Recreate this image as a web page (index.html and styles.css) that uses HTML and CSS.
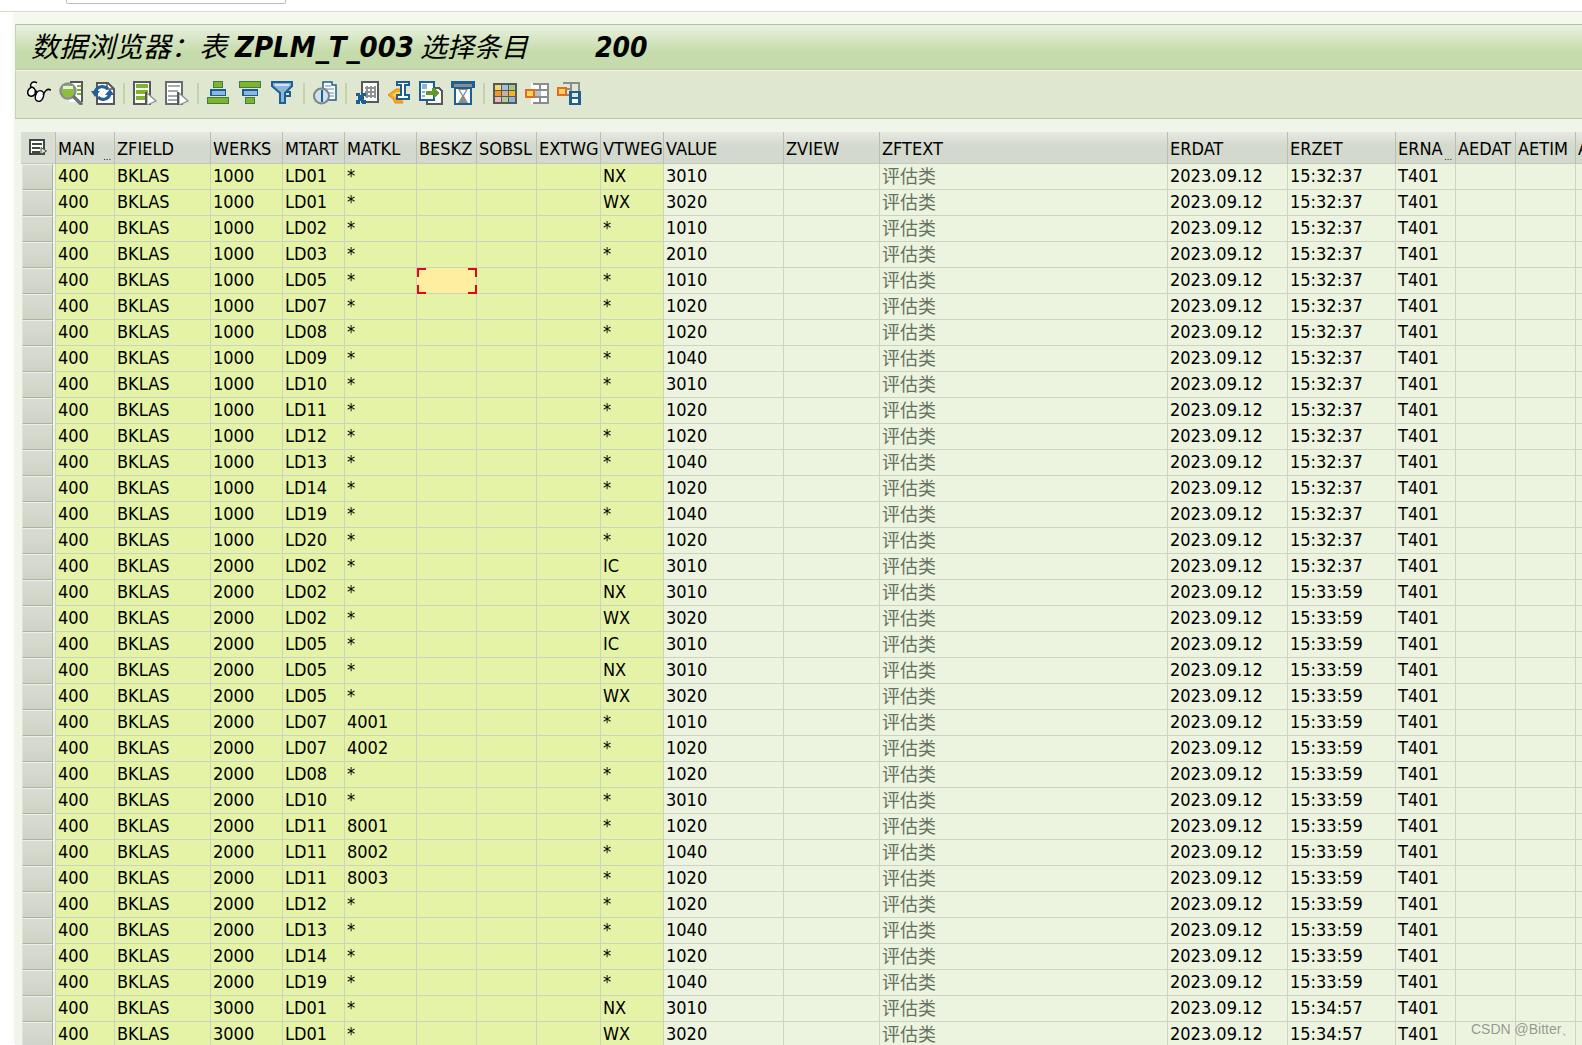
FILE: index.html
```html
<!DOCTYPE html>
<html lang="zh">
<head>
<meta charset="utf-8">
<title>数据浏览器</title>
<link rel="stylesheet" href="styles.css">
</head>
<body>
<div class="topbar"><div class="inputstub"></div></div>
<div class="shell">
<div class="panel">
<div class="titlebar"><h1 class="title">数据浏览器：表 <b>ZPLM_T_003</b> <span class="tail">选择条目</span><b class="count">200</b></h1></div>
<div class="toolbar">
<svg class="ic" viewBox="0 0 24 24"><g fill="#fff" stroke="#000" stroke-width="1.500"><path d="M10 2C8 0 5 1 4 3C3 5 4 6 5 6C2 7 0 10 1 13C2 16 6 16 8 13C9 10 8 7 5 6"/><ellipse cx="12.500" cy="15" rx="4" ry="5.500" transform="rotate(20 12.500 15)"/><path fill="none" d="M8 11L10 10M16 14C18 10 20 7 24 9"/></g></svg>
<svg class="ic" viewBox="0 0 24 24" shape-rendering="crispEdges"><path fill="#fff" d="M10 1H24V21H10Z"/><path fill="none" stroke="#55595a" stroke-width="2" d="M11 1H23V21"/><path fill="#7fb52a" d="M18 4H22V6H18ZM18 8H22V10H18ZM18 12H22V14H18Z"/><circle cx="9" cy="10" r="7.500" fill="#8cc03a" stroke="#8b8f90" stroke-width="2.400" shape-rendering="auto"/><path d="M4 5H14V8H4Z" fill="#e6efd8"/><path stroke="#6d7071" stroke-width="3.400" d="M14 15L23 24" shape-rendering="auto"/></svg>
<svg class="ic" viewBox="0 0 24 24"><path fill="#fff" stroke="#55595a" stroke-width="2" d="M6 2H17L23 8V23H6Z"/><path fill="none" stroke="#55595a" stroke-width="1.500" d="M16 2V8H23"/><path fill="none" stroke="#245f9e" stroke-width="3.200" d="M4 11C6 5 13 4 17 8M19 13C17 19 10 20 7 16"/><path fill="#245f9e" d="M0 10H9L4 16ZM23 14H14L19 8Z"/></svg>
<span class="sep"></span>
<svg class="ic" viewBox="0 0 24 24" shape-rendering="crispEdges"><path fill="#fff" d="M1 1H17V23H1Z"/><path fill="none" stroke="#55595a" stroke-width="2" d="M1 1H17V23H1Z"/><path fill="#7fb52a" d="M3 3H15V7H3ZM3 9H15V13H3ZM3 15H13V19H3Z"/><path fill="#fff" stroke="#8a8d8e" stroke-width="1.200" d="M14 12L23 20L14 24Z" shape-rendering="auto"/><path stroke="#55595a" stroke-width="2" d="M13 11V24"/></svg>
<svg class="ic" viewBox="0 0 24 24" shape-rendering="crispEdges"><path fill="#fff" d="M1 1H17V23H1Z"/><path fill="none" stroke="#6a6d6e" stroke-width="2" d="M1 1H17V23H1Z"/><path fill="none" stroke="#a8abac" stroke-width="2" d="M3 5H15M3 10H13M3 15H13M3 19H13"/><path fill="#fff" stroke="#8a8d8e" stroke-width="1.200" d="M14 12L23 20L14 24Z" shape-rendering="auto"/><path stroke="#55595a" stroke-width="2" d="M13 11V24"/></svg>
<span class="sep"></span>
<svg class="ic" viewBox="0 0 24 24" shape-rendering="crispEdges"><path fill="#7fb52a" stroke="#3f7a4a" d="M6.500 .5H15.500V6.500H6.500Z"/><path fill="#8fb7dc" stroke="#1b5f93" stroke-width="1.500" d="M3.750 8.750H18.250V14.250H3.750Z"/><path fill="#7fb52a" stroke="#3f7a4a" d="M.5 16.500H21.500V22.500H.5Z"/></svg>
<svg class="ic" viewBox="0 0 24 24" shape-rendering="crispEdges"><path fill="#7fb52a" stroke="#3f7a4a" d="M.5 .5H21.500V6.500H.5Z"/><path fill="#8fb7dc" stroke="#1b5f93" stroke-width="1.500" d="M3.750 8.750H18.250V14.250H3.750Z"/><path fill="#7fb52a" stroke="#3f7a4a" d="M6.500 16.500H15.500V22.500H6.500Z"/></svg>
<svg class="ic" viewBox="0 0 24 24"><path fill="#8fb4d9" stroke="#1b5f93" stroke-width="2" d="M1 1H21V5L14 12V22H9V12L1 5Z"/><path fill="none" stroke="#1b5f93" stroke-width="2" d="M15 11H19V15H15"/><path fill="#d4e1ef" d="M4 3H18V5H4Z"/></svg>
<span class="sep"></span>
<svg class="ic" viewBox="0 0 24 24"><path fill="#fff" stroke="#1b5f93" stroke-width="1.500" d="M10 1H19V4H23V19H10Z"/><path stroke="#8fb4d9" stroke-width="1.500" d="M12 5H18M12 8H21M14 12H21M14 15H21"/><circle cx="8.500" cy="15" r="7.500" fill="#cfdfee" stroke="#7f8485" stroke-width="2"/><path fill="#1b5f93" d="M8 9H10V21H8Z"/></svg>
<span class="sep"></span>
<svg class="ic" viewBox="0 0 24 24" shape-rendering="crispEdges"><path fill="#fff" stroke="#55595a" stroke-width="2" d="M7 1H23V21H7Z"/><path stroke="#8f9293" stroke-width="2" fill="none" d="M12 5V17M16 5V17M20 5V17M10 7H21M10 11H21M10 15H21"/><path fill="#1b5f93" d="M1 12H5V14H7V12H11V15H9V19H11V23H7V20H5V23H1V19H3V15H1Z"/></svg>
<svg class="ic" viewBox="0 0 24 24"><path fill="#f7a823" stroke="#e8881a" d="M1 14L9 8H14V18L16 22H8L6 18Z"/><path fill="#fbd65a" d="M5 14L10 11H13V16H8Z"/><path fill="#fff" stroke="#1b5f93" stroke-width="2" d="M10 1H22V4H18V14H22V18H10V14H14V4H10Z"/></svg>
<svg class="ic" viewBox="0 0 24 24" shape-rendering="crispEdges"><path fill="#fff" stroke="#55595a" stroke-width="2" d="M14 7H20L23 10V23H8V19"/><path fill="#fff" stroke="#1b5f93" stroke-width="2" d="M1 1H15V19H1Z"/><path fill="#8fb4d9" d="M3 3H8V8H3ZM3 10H6V12H3ZM3 14H6V16H3Z"/><path fill="#5f9a2a" d="M7 10H13V7H15L21 12L15 17V14H7Z"/></svg>
<svg class="ic" viewBox="0 0 24 24" shape-rendering="crispEdges"><path fill="#1b5f93" d="M0 0H24V7H0Z"/><path fill="#8a8d8e" d="M3 3H21V7H3Z"/><path fill="#fff" stroke="#1b5f93" stroke-width="2" d="M4 7H20V23H4Z"/><path fill="#8a8d8e" d="M7 8H17L13 15L17 22H7L11 15Z" shape-rendering="auto"/><path fill="#fff" d="M9 9H15L12 14Z" shape-rendering="auto"/></svg>
<span class="sep"></span>
<svg class="ic" viewBox="0 0 24 24" shape-rendering="crispEdges"><path fill="#55595a" d="M0 2H24V23H0Z"/><path fill="#f8d66a" d="M2 4H8V9H2Z"/><path fill="#9cc0e4" d="M9 4H15V9H9Z"/><path fill="#a5c979" d="M16 4H22V9H16Z"/><path fill="#f29a1f" d="M2 10H8V15H2Z"/><path fill="#c8b09c" d="M9 10H15V15H9Z"/><path fill="#f7b21d" d="M16 10H22V15H16Z"/><path fill="#efb8bd" d="M2 16H8V21H2Z"/><path fill="#aed08f" d="M9 16H15V21H9Z"/><path fill="#8fb4d9" d="M16 16H22V21H16Z"/></svg>
<svg class="ic" viewBox="0 0 24 24" shape-rendering="crispEdges"><path fill="#fff" d="M6 2H24V23H6Z"/><path fill="none" stroke="#8a8d8e" stroke-width="2" d="M8 3H23V22H8M15 3V22M22 9H8M22 16H8"/><path fill="#bcbfc0" d="M10 10H16V15H10Z"/><path fill="#fbd65a" stroke="#e26a23" stroke-width="2" d="M1 9H9V16H1Z"/></svg>
<svg class="ic" viewBox="0 0 24 24" shape-rendering="crispEdges"><path fill="none" stroke="#8a8d8e" stroke-width="2" d="M6 2H22V10M14 2V18M6 8H14M6 14H14"/><path fill="#fbd65a" stroke="#e26a23" stroke-width="2" d="M1 7H9V14H1Z"/><path fill="#1b5f93" d="M12 10H24V24H12Z"/><path fill="#dfe7d0" d="M15 12H21V16H15Z"/><path fill="#fff" d="M15 18H21V22H15Z"/></svg>
</div>
<div class="gridwrap">
<table class="grid">
<colgroup><col class="c-rh"><col class="c-man"><col class="c-zfield"><col class="c-werks"><col class="c-mtart"><col class="c-matkl"><col class="c-beskz"><col class="c-sobsl"><col class="c-extwg"><col class="c-vtweg"><col class="c-value"><col class="c-zview"><col class="c-zftext"><col class="c-erdat"><col class="c-erzet"><col class="c-erna"><col class="c-aedat"><col class="c-aetim"><col class="c-last"></colgroup>
<thead><tr><th class="corner"><svg class="selicon" viewBox="0 0 18 17" shape-rendering="crispEdges"><path fill="#fff" stroke="#3f4a45" stroke-width="2" d="M1 1H15V15H1Z"/><path stroke="#3f4a45" stroke-width="2" d="M3 5H13M3 9H11M3 13H11"/><path fill="#dfe7d0" stroke="#3f4a45" d="M12 8.500L17.500 12L12 15.500Z" shape-rendering="auto"/></svg></th><th class="trunc">MAN</th><th>ZFIELD</th><th>WERKS</th><th>MTART</th><th>MATKL</th><th>BESKZ</th><th>SOBSL</th><th>EXTWG</th><th>VTWEG</th><th>VALUE</th><th>ZVIEW</th><th>ZFTEXT</th><th>ERDAT</th><th>ERZET</th><th class="trunc">ERNA</th><th>AEDAT</th><th>AETIM</th><th>AENAM</th></tr></thead>
<tbody>
<tr><td class="rh"><div class="rb"></div></td><td class="k">400</td><td class="k">BKLAS</td><td class="k">1000</td><td class="k">LD01</td><td class="k">*</td><td class="k"></td><td class="k"></td><td class="k"></td><td class="k">NX</td><td>3010</td><td></td><td class="zh">评估类</td><td>2023.09.12</td><td>15:32:37</td><td>T401</td><td></td><td></td><td></td></tr>
<tr><td class="rh"><div class="rb"></div></td><td class="k">400</td><td class="k">BKLAS</td><td class="k">1000</td><td class="k">LD01</td><td class="k">*</td><td class="k"></td><td class="k"></td><td class="k"></td><td class="k">WX</td><td>3020</td><td></td><td class="zh">评估类</td><td>2023.09.12</td><td>15:32:37</td><td>T401</td><td></td><td></td><td></td></tr>
<tr><td class="rh"><div class="rb"></div></td><td class="k">400</td><td class="k">BKLAS</td><td class="k">1000</td><td class="k">LD02</td><td class="k">*</td><td class="k"></td><td class="k"></td><td class="k"></td><td class="k">*</td><td>1010</td><td></td><td class="zh">评估类</td><td>2023.09.12</td><td>15:32:37</td><td>T401</td><td></td><td></td><td></td></tr>
<tr><td class="rh"><div class="rb"></div></td><td class="k">400</td><td class="k">BKLAS</td><td class="k">1000</td><td class="k">LD03</td><td class="k">*</td><td class="k"></td><td class="k"></td><td class="k"></td><td class="k">*</td><td>2010</td><td></td><td class="zh">评估类</td><td>2023.09.12</td><td>15:32:37</td><td>T401</td><td></td><td></td><td></td></tr>
<tr><td class="rh"><div class="rb"></div></td><td class="k">400</td><td class="k">BKLAS</td><td class="k">1000</td><td class="k">LD05</td><td class="k">*</td><td class="sel"></td><td class="k"></td><td class="k"></td><td class="k">*</td><td>1010</td><td></td><td class="zh">评估类</td><td>2023.09.12</td><td>15:32:37</td><td>T401</td><td></td><td></td><td></td></tr>
<tr><td class="rh"><div class="rb"></div></td><td class="k">400</td><td class="k">BKLAS</td><td class="k">1000</td><td class="k">LD07</td><td class="k">*</td><td class="k"></td><td class="k"></td><td class="k"></td><td class="k">*</td><td>1020</td><td></td><td class="zh">评估类</td><td>2023.09.12</td><td>15:32:37</td><td>T401</td><td></td><td></td><td></td></tr>
<tr><td class="rh"><div class="rb"></div></td><td class="k">400</td><td class="k">BKLAS</td><td class="k">1000</td><td class="k">LD08</td><td class="k">*</td><td class="k"></td><td class="k"></td><td class="k"></td><td class="k">*</td><td>1020</td><td></td><td class="zh">评估类</td><td>2023.09.12</td><td>15:32:37</td><td>T401</td><td></td><td></td><td></td></tr>
<tr><td class="rh"><div class="rb"></div></td><td class="k">400</td><td class="k">BKLAS</td><td class="k">1000</td><td class="k">LD09</td><td class="k">*</td><td class="k"></td><td class="k"></td><td class="k"></td><td class="k">*</td><td>1040</td><td></td><td class="zh">评估类</td><td>2023.09.12</td><td>15:32:37</td><td>T401</td><td></td><td></td><td></td></tr>
<tr><td class="rh"><div class="rb"></div></td><td class="k">400</td><td class="k">BKLAS</td><td class="k">1000</td><td class="k">LD10</td><td class="k">*</td><td class="k"></td><td class="k"></td><td class="k"></td><td class="k">*</td><td>3010</td><td></td><td class="zh">评估类</td><td>2023.09.12</td><td>15:32:37</td><td>T401</td><td></td><td></td><td></td></tr>
<tr><td class="rh"><div class="rb"></div></td><td class="k">400</td><td class="k">BKLAS</td><td class="k">1000</td><td class="k">LD11</td><td class="k">*</td><td class="k"></td><td class="k"></td><td class="k"></td><td class="k">*</td><td>1020</td><td></td><td class="zh">评估类</td><td>2023.09.12</td><td>15:32:37</td><td>T401</td><td></td><td></td><td></td></tr>
<tr><td class="rh"><div class="rb"></div></td><td class="k">400</td><td class="k">BKLAS</td><td class="k">1000</td><td class="k">LD12</td><td class="k">*</td><td class="k"></td><td class="k"></td><td class="k"></td><td class="k">*</td><td>1020</td><td></td><td class="zh">评估类</td><td>2023.09.12</td><td>15:32:37</td><td>T401</td><td></td><td></td><td></td></tr>
<tr><td class="rh"><div class="rb"></div></td><td class="k">400</td><td class="k">BKLAS</td><td class="k">1000</td><td class="k">LD13</td><td class="k">*</td><td class="k"></td><td class="k"></td><td class="k"></td><td class="k">*</td><td>1040</td><td></td><td class="zh">评估类</td><td>2023.09.12</td><td>15:32:37</td><td>T401</td><td></td><td></td><td></td></tr>
<tr><td class="rh"><div class="rb"></div></td><td class="k">400</td><td class="k">BKLAS</td><td class="k">1000</td><td class="k">LD14</td><td class="k">*</td><td class="k"></td><td class="k"></td><td class="k"></td><td class="k">*</td><td>1020</td><td></td><td class="zh">评估类</td><td>2023.09.12</td><td>15:32:37</td><td>T401</td><td></td><td></td><td></td></tr>
<tr><td class="rh"><div class="rb"></div></td><td class="k">400</td><td class="k">BKLAS</td><td class="k">1000</td><td class="k">LD19</td><td class="k">*</td><td class="k"></td><td class="k"></td><td class="k"></td><td class="k">*</td><td>1040</td><td></td><td class="zh">评估类</td><td>2023.09.12</td><td>15:32:37</td><td>T401</td><td></td><td></td><td></td></tr>
<tr><td class="rh"><div class="rb"></div></td><td class="k">400</td><td class="k">BKLAS</td><td class="k">1000</td><td class="k">LD20</td><td class="k">*</td><td class="k"></td><td class="k"></td><td class="k"></td><td class="k">*</td><td>1020</td><td></td><td class="zh">评估类</td><td>2023.09.12</td><td>15:32:37</td><td>T401</td><td></td><td></td><td></td></tr>
<tr><td class="rh"><div class="rb"></div></td><td class="k">400</td><td class="k">BKLAS</td><td class="k">2000</td><td class="k">LD02</td><td class="k">*</td><td class="k"></td><td class="k"></td><td class="k"></td><td class="k">IC</td><td>3010</td><td></td><td class="zh">评估类</td><td>2023.09.12</td><td>15:32:37</td><td>T401</td><td></td><td></td><td></td></tr>
<tr><td class="rh"><div class="rb"></div></td><td class="k">400</td><td class="k">BKLAS</td><td class="k">2000</td><td class="k">LD02</td><td class="k">*</td><td class="k"></td><td class="k"></td><td class="k"></td><td class="k">NX</td><td>3010</td><td></td><td class="zh">评估类</td><td>2023.09.12</td><td>15:33:59</td><td>T401</td><td></td><td></td><td></td></tr>
<tr><td class="rh"><div class="rb"></div></td><td class="k">400</td><td class="k">BKLAS</td><td class="k">2000</td><td class="k">LD02</td><td class="k">*</td><td class="k"></td><td class="k"></td><td class="k"></td><td class="k">WX</td><td>3020</td><td></td><td class="zh">评估类</td><td>2023.09.12</td><td>15:33:59</td><td>T401</td><td></td><td></td><td></td></tr>
<tr><td class="rh"><div class="rb"></div></td><td class="k">400</td><td class="k">BKLAS</td><td class="k">2000</td><td class="k">LD05</td><td class="k">*</td><td class="k"></td><td class="k"></td><td class="k"></td><td class="k">IC</td><td>3010</td><td></td><td class="zh">评估类</td><td>2023.09.12</td><td>15:33:59</td><td>T401</td><td></td><td></td><td></td></tr>
<tr><td class="rh"><div class="rb"></div></td><td class="k">400</td><td class="k">BKLAS</td><td class="k">2000</td><td class="k">LD05</td><td class="k">*</td><td class="k"></td><td class="k"></td><td class="k"></td><td class="k">NX</td><td>3010</td><td></td><td class="zh">评估类</td><td>2023.09.12</td><td>15:33:59</td><td>T401</td><td></td><td></td><td></td></tr>
<tr><td class="rh"><div class="rb"></div></td><td class="k">400</td><td class="k">BKLAS</td><td class="k">2000</td><td class="k">LD05</td><td class="k">*</td><td class="k"></td><td class="k"></td><td class="k"></td><td class="k">WX</td><td>3020</td><td></td><td class="zh">评估类</td><td>2023.09.12</td><td>15:33:59</td><td>T401</td><td></td><td></td><td></td></tr>
<tr><td class="rh"><div class="rb"></div></td><td class="k">400</td><td class="k">BKLAS</td><td class="k">2000</td><td class="k">LD07</td><td class="k">4001</td><td class="k"></td><td class="k"></td><td class="k"></td><td class="k">*</td><td>1010</td><td></td><td class="zh">评估类</td><td>2023.09.12</td><td>15:33:59</td><td>T401</td><td></td><td></td><td></td></tr>
<tr><td class="rh"><div class="rb"></div></td><td class="k">400</td><td class="k">BKLAS</td><td class="k">2000</td><td class="k">LD07</td><td class="k">4002</td><td class="k"></td><td class="k"></td><td class="k"></td><td class="k">*</td><td>1020</td><td></td><td class="zh">评估类</td><td>2023.09.12</td><td>15:33:59</td><td>T401</td><td></td><td></td><td></td></tr>
<tr><td class="rh"><div class="rb"></div></td><td class="k">400</td><td class="k">BKLAS</td><td class="k">2000</td><td class="k">LD08</td><td class="k">*</td><td class="k"></td><td class="k"></td><td class="k"></td><td class="k">*</td><td>1020</td><td></td><td class="zh">评估类</td><td>2023.09.12</td><td>15:33:59</td><td>T401</td><td></td><td></td><td></td></tr>
<tr><td class="rh"><div class="rb"></div></td><td class="k">400</td><td class="k">BKLAS</td><td class="k">2000</td><td class="k">LD10</td><td class="k">*</td><td class="k"></td><td class="k"></td><td class="k"></td><td class="k">*</td><td>3010</td><td></td><td class="zh">评估类</td><td>2023.09.12</td><td>15:33:59</td><td>T401</td><td></td><td></td><td></td></tr>
<tr><td class="rh"><div class="rb"></div></td><td class="k">400</td><td class="k">BKLAS</td><td class="k">2000</td><td class="k">LD11</td><td class="k">8001</td><td class="k"></td><td class="k"></td><td class="k"></td><td class="k">*</td><td>1020</td><td></td><td class="zh">评估类</td><td>2023.09.12</td><td>15:33:59</td><td>T401</td><td></td><td></td><td></td></tr>
<tr><td class="rh"><div class="rb"></div></td><td class="k">400</td><td class="k">BKLAS</td><td class="k">2000</td><td class="k">LD11</td><td class="k">8002</td><td class="k"></td><td class="k"></td><td class="k"></td><td class="k">*</td><td>1040</td><td></td><td class="zh">评估类</td><td>2023.09.12</td><td>15:33:59</td><td>T401</td><td></td><td></td><td></td></tr>
<tr><td class="rh"><div class="rb"></div></td><td class="k">400</td><td class="k">BKLAS</td><td class="k">2000</td><td class="k">LD11</td><td class="k">8003</td><td class="k"></td><td class="k"></td><td class="k"></td><td class="k">*</td><td>1020</td><td></td><td class="zh">评估类</td><td>2023.09.12</td><td>15:33:59</td><td>T401</td><td></td><td></td><td></td></tr>
<tr><td class="rh"><div class="rb"></div></td><td class="k">400</td><td class="k">BKLAS</td><td class="k">2000</td><td class="k">LD12</td><td class="k">*</td><td class="k"></td><td class="k"></td><td class="k"></td><td class="k">*</td><td>1020</td><td></td><td class="zh">评估类</td><td>2023.09.12</td><td>15:33:59</td><td>T401</td><td></td><td></td><td></td></tr>
<tr><td class="rh"><div class="rb"></div></td><td class="k">400</td><td class="k">BKLAS</td><td class="k">2000</td><td class="k">LD13</td><td class="k">*</td><td class="k"></td><td class="k"></td><td class="k"></td><td class="k">*</td><td>1040</td><td></td><td class="zh">评估类</td><td>2023.09.12</td><td>15:33:59</td><td>T401</td><td></td><td></td><td></td></tr>
<tr><td class="rh"><div class="rb"></div></td><td class="k">400</td><td class="k">BKLAS</td><td class="k">2000</td><td class="k">LD14</td><td class="k">*</td><td class="k"></td><td class="k"></td><td class="k"></td><td class="k">*</td><td>1020</td><td></td><td class="zh">评估类</td><td>2023.09.12</td><td>15:33:59</td><td>T401</td><td></td><td></td><td></td></tr>
<tr><td class="rh"><div class="rb"></div></td><td class="k">400</td><td class="k">BKLAS</td><td class="k">2000</td><td class="k">LD19</td><td class="k">*</td><td class="k"></td><td class="k"></td><td class="k"></td><td class="k">*</td><td>1040</td><td></td><td class="zh">评估类</td><td>2023.09.12</td><td>15:33:59</td><td>T401</td><td></td><td></td><td></td></tr>
<tr><td class="rh"><div class="rb"></div></td><td class="k">400</td><td class="k">BKLAS</td><td class="k">3000</td><td class="k">LD01</td><td class="k">*</td><td class="k"></td><td class="k"></td><td class="k"></td><td class="k">NX</td><td>3010</td><td></td><td class="zh">评估类</td><td>2023.09.12</td><td>15:34:57</td><td>T401</td><td></td><td></td><td></td></tr>
<tr><td class="rh"><div class="rb"></div></td><td class="k">400</td><td class="k">BKLAS</td><td class="k">3000</td><td class="k">LD01</td><td class="k">*</td><td class="k"></td><td class="k"></td><td class="k"></td><td class="k">WX</td><td>3020</td><td></td><td class="zh">评估类</td><td>2023.09.12</td><td>15:34:57</td><td>T401</td><td></td><td></td><td></td></tr>
</tbody>
</table>
</div>
</div>
</div>
<div class="watermark">CSDN @Bitter、</div>
</body>
</html>
```
FILE: styles.css
```css
html, body { margin: 0; padding: 0; }
body {
  width: 1582px;
  height: 1045px;
  overflow: hidden;
  position: relative;
  background: #fff;
  font-family: "DejaVu Sans Condensed", "DejaVu Sans", "Noto Sans CJK SC", sans-serif;
  color: #000;
}
.topbar { height: 11px; }
.inputstub {
  margin-left: 66px;
  width: 220px;
  height: 4px;
  box-sizing: border-box;
  border: 1px solid #bdbdbd;
  border-top: 0;
  border-radius: 0 0 2px 2px;
  background: #fff;
}
.shell {
  border-top: 1px solid #d6d9ce;
  padding: 12px 0 0 15px;
  height: 1033px;
  box-sizing: border-box;
  background: linear-gradient(90deg, #fff 0, #fdfefc 12px, #f4f8ef 15px);
}
.panel {
  background: #f0f5e9;
  height: 1021px;
  overflow: hidden;
}
.titlebar {
  height: 46px;
  box-sizing: border-box;
  border-top: 1px solid #adc598;
  border-left: 1px solid #c5d3b5;
  border-bottom: 1px solid #b9caa6;
  background: linear-gradient(#e9f1df 0, #c6dbab 62%, #c6dbab 100%);
  display: flex;
  align-items: center;
  padding: 0 0 2px 15px;
}
.title {
  margin: 0;
  font-family: "Noto Sans CJK SC", sans-serif;
  font-weight: 400;
  font-style: italic;
  font-size: 28px;
  line-height: 40px;
  white-space: nowrap;
  display: flex;
  align-items: baseline;
  gap: 8px;
}
.title b {
  font-family: "DejaVu Sans Condensed", "DejaVu Sans", sans-serif;
  font-weight: 700;
  font-size: 29px;
}
.title .tail { font-size: 27px; margin-left: -2px; }
.title b.count { margin-left: 59px; font-size: 28px; }
.toolbar {
  height: 49px;
  box-sizing: border-box;
  border-top: 1px solid #f3f7ec;
  border-left: 1px solid #c5d3b5;
  border-bottom: 1px solid #b7c6a3;
  background: #dfe7d0;
  display: flex;
  align-items: flex-start;
  gap: 8px;
  padding: 10px 0 0 11px;
}
.ic { width: 24px; height: 24px; flex: none; display: block; }
.sep {
  flex: none;
  width: 2px;
  height: 21px;
  margin-top: 2px;
  background: #c3d4ad;
}
.gridwrap { padding: 13px 0 0 6px; }
.grid {
  table-layout: fixed;
  border-collapse: separate;
  border-spacing: 0;
  width: 1615px;
  font-size: 18px;
  line-height: 20px;
}
.c-rh { width: 35px; }
.c-man { width: 59px; }
.c-zfield { width: 96px; }
.c-werks { width: 72px; }
.c-mtart { width: 62px; }
.c-matkl { width: 72px; }
.c-beskz { width: 60px; }
.c-sobsl { width: 60px; }
.c-extwg { width: 64px; }
.c-vtweg { width: 63px; }
.c-value { width: 120px; }
.c-zview { width: 96px; }
.c-zftext { width: 288px; }
.c-erdat { width: 120px; }
.c-erzet { width: 108px; }
.c-erna { width: 60px; }
.c-aedat { width: 60px; }
.c-aetim { width: 60px; }
.c-last { width: 60px; }
th, td {
  box-sizing: border-box;
  padding: 0 0 0 2px;
  white-space: nowrap;
  text-align: left;
  vertical-align: middle;
  font-weight: 400;
}
th {
  height: 32px;
  padding-top: 2px;
  background: linear-gradient(#e7e9e2 0, #d4d9cd 45%, #d4d9cd 100%);
  border-right: 1px solid #b8bfb0;
  border-bottom: 1px solid #c3c9bb;
  position: relative;
}
th.corner { padding: 0; background: #d9ddd2; }
.selicon { width: 18px; height: 17px; display: block; margin: 0 0 0 8px; }
th.trunc::after {
  content: "...";
  position: absolute;
  right: 3px;
  bottom: 1px;
  font-size: 9px;
  line-height: 10px;
}
td {
  height: 26px;
  padding-bottom: 2px;
  background: #ecf4df;
  border-right: 1px solid #ccd3c2;
  border-bottom: 1px solid #ccd3c2;
}
td.k { background: #e5f3a6; }
td.zh {
  padding-bottom: 4px;
  font-family: "Noto Sans CJK SC", sans-serif;
  font-weight: 400;
  font-size: 18px;
  color: #66725f;
}
td.rh {
  padding: 0;
  background: #f0f5e9;
  border-bottom: 0;
  border-right: 1px solid #ccd3c2;
}
.rb {
  margin-left: 1px;
  width: 31px;
  height: 26px;
  box-sizing: border-box;
  border-top: 1px solid #eef0e9;
  border-left: 1px solid #dfe2d9;
  border-right: 1px solid #a8b49b;
  border-bottom: 1px solid #a8b49b;
  background: linear-gradient(#d9dcd2, #ced3c6);
}
td.sel {
  border-right-width: 0;
  border-bottom-width: 0;
  background-color: #fdeea0;
  background-repeat: no-repeat;
  background-image:
    linear-gradient(#e30613, #e30613), linear-gradient(#e30613, #e30613),
    linear-gradient(#e30613, #e30613), linear-gradient(#e30613, #e30613),
    linear-gradient(#e30613, #e30613), linear-gradient(#e30613, #e30613),
    linear-gradient(#e30613, #e30613), linear-gradient(#e30613, #e30613),
    linear-gradient(#ccd3c2, #ccd3c2), linear-gradient(#ccd3c2, #ccd3c2);
  background-size: 9px 2px, 2px 9px, 9px 2px, 2px 9px, 9px 2px, 2px 9px, 9px 2px, 2px 9px, 100% 1px, 1px 100%;
  background-position: 0 0, 0 0, 100% 0, 100% 0, 0 100%, 0 100%, 100% 100%, 100% 100%, 0 100%, 100% 0;
}
.watermark {
  position: absolute;
  left: 1471px;
  top: 1020px;
  font-family: "Liberation Sans", sans-serif;
  font-size: 14px;
  line-height: 18px;
  color: rgba(90, 90, 90, .6);
}
```
